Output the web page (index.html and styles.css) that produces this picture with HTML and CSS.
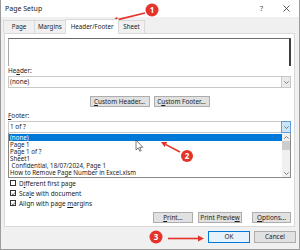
FILE: index.html
```html
<!DOCTYPE html>
<html>
<head>
<meta charset="utf-8">
<link rel="stylesheet" href="styles.css">
</head>
<body>
<div class="dialog">
  <div class="titlebar">
    <span class="title">Page Setup</span>
    <span class="ctl">?</span>
    <span class="ctl"><svg width="7" height="7" viewBox="0 0 7 7"><path d="M0.5 0.5 L6.5 6.5 M6.5 0.5 L0.5 6.5" stroke="#333" stroke-width="0.8" fill="none"/></svg></span>
  </div>
  <div class="tabs">
    <div class="tab wide">Page</div>
    <div class="tab">Margins</div>
    <div class="tab active">Header/Footer</div>
    <div class="tab last">Sheet</div>
  </div>
  <div class="pane">
    <div class="preview"></div>
    <div class="lbl">He<u>a</u>der:</div>
    <div class="combo">
      <span class="val">(none)</span>
      <span class="dd"><svg width="5" height="3" viewBox="0 0 5 3"><path d="M0.3 0.3 L2.5 2.5 L4.7 0.3" stroke="#555" stroke-width="0.7" fill="none"/></svg></span>
    </div>
    <div class="row-center">
      <div class="btn w60"><u>C</u>ustom Header...</div>
      <div class="btn w56">C<u>u</u>stom Footer...</div>
    </div>
    <div class="lbl lbl-footer"><u>F</u>ooter:</div>
    <div class="combo">
      <span class="val">1 of ?</span>
      <span class="dd hot"><svg width="5" height="3" viewBox="0 0 5 3"><path d="M0.3 0.3 L2.5 2.5 L4.7 0.3" stroke="#555" stroke-width="0.7" fill="none"/></svg></span>
    </div>
    <div class="list">
      <div class="items">
        <div class="item sel">(none)</div>
        <div class="item">Page 1</div>
        <div class="item">Page 1 of ?</div>
        <div class="item">Sheet1</div>
        <div class="item">&nbsp;Confidential, 18/07/2024, Page 1</div>
        <div class="item">How to Remove Page Number in Excel.xlsm</div>
      </div>
      <div class="scroll">
        <svg width="5" height="3" viewBox="0 0 5 3"><path d="M0.3 2.7 L2.5 0.5 L4.7 2.7" stroke="#555" stroke-width="0.7" fill="none"/></svg>
        <div class="thumb"></div>
        <div class="track"></div>
        <svg width="5" height="3" viewBox="0 0 5 3"><path d="M0.3 0.3 L2.5 2.5 L4.7 0.3" stroke="#555" stroke-width="0.7" fill="none"/></svg>
      </div>
    </div>
    <div class="checks">
      <div class="chk"><span class="box"></span><span>D<u>i</u>fferent first page</span></div>
      <div class="chk"><span class="box"><svg width="5" height="5" viewBox="0 0 5 5"><path d="M0.6 2.5 L2 3.9 L4.4 1.1" stroke="#333" stroke-width="0.7" fill="none"/></svg></span><span>Sca<u>l</u>e with document</span></div>
      <div class="chk"><span class="box"><svg width="5" height="5" viewBox="0 0 5 5"><path d="M0.6 2.5 L2 3.9 L4.4 1.1" stroke="#333" stroke-width="0.7" fill="none"/></svg></span><span>Align with page <u>m</u>argins</span></div>
    </div>
    <div class="row-end">
      <div class="btn w40"><u>P</u>rint...</div>
      <div class="btn w44">Print Previe<u>w</u></div>
      <div class="btn w39"><u>O</u>ptions...</div>
    </div>
  </div>
  <div class="actions">
    <div class="btn big default">OK</div>
    <div class="btn big">Cancel</div>
  </div>
  <svg class="annot" width="300" height="250" viewBox="0 0 300 250">
    <g fill="#e5332a" stroke="#e5332a">
      <line x1="145" y1="13" x2="117.8" y2="19.6" stroke-width="1.6"/>
      <polygon points="112,21 118.5,22.5 117.1,16.7" stroke="none"/>
      <circle cx="152" cy="10" r="6.5" stroke="none"/>
      <line x1="180" y1="152" x2="165.9" y2="144.6" stroke-width="1.6"/>
      <polygon points="161,142 167.2,142.1 164.6,147.1" stroke="none"/>
      <circle cx="187" cy="156" r="6" stroke="none"/>
      <line x1="168" y1="238.5" x2="198" y2="238.5" stroke-width="1.6"/>
      <polygon points="204,238.5 198,235.5 198,241.5" stroke="none"/>
      <circle cx="156" cy="237" r="6.5" stroke="none"/>
    </g>
    <g fill="#fff" font-family="Noto Sans, sans-serif" font-weight="700" font-size="8" text-anchor="middle">
      <text x="152" y="12.8">1</text>
      <text x="187" y="158.8">2</text>
      <text x="156" y="239.8">3</text>
    </g>
    <path d="M136 140 L136 150 L138.3 147.8 L139.8 151.2 L141.2 150.6 L139.7 147.3 L142.8 147.3 Z" fill="#fff" stroke="#222" stroke-width="0.6" stroke-linejoin="round"/>
  </svg>
</div>
</body>
</html>
```
FILE: styles.css
```css
* { box-sizing: border-box; margin: 0; padding: 0; }
body {
  margin: 0;
  width: 300px;
  height: 250px;
  overflow: hidden;
  font-family: "Noto Sans", "Open Sans", sans-serif;
  font-size: 6.4px;
  color: #1b1b1b;
  background: #fff;
}
u { text-decoration-thickness: 0.5px; text-underline-offset: 1px; }

.dialog {
  position: relative;
  width: 300px;
  height: 250px;
  background: #f0f0f0;
  border: 1px solid #9c9c9c;
  border-top: 0;
  display: flex;
  flex-direction: column;
}

.titlebar {
  height: 17px;
  background: #fff;
  display: flex;
  align-items: center;
  padding-left: 4px;
  font-size: 7px;
  color: #222;
}
.title { flex: 1; }
.ctl {
  width: 25px;
  display: flex;
  justify-content: center;
  color: #444;
  font-size: 7px;
}

.tabs {
  margin-top: 3px;
  height: 13px;
  padding-left: 2px;
  display: flex;
  align-items: flex-end;
  font-size: 6.2px;
}
.tab {
  height: 13px;
  line-height: 12px;
  padding: 0 3px;
  min-width: 27px;
  text-align: center;
  border: 1px solid #d9d9d9;
  border-bottom: 0;
  margin-right: -1px;
  background: #f0f0f0;
  color: #222;
}
.tab.wide { min-width: 32px; }
.tab.last { min-width: 28px; }
.tab.active {
  height: 15px;
  line-height: 13px;
  margin: 0 -2px -1px 0;
  padding: 0 5px;
  background: #fff;
  position: relative;
  z-index: 1;
}

.pane {
  margin: 0 4px 0 3px;
  height: 194px;
  background: #fff;
  border: 1px solid #d9d9d9;
  padding: 0 3px;
  display: flex;
  flex-direction: column;
}

.preview {
  margin-top: 4px;
  height: 28px;
  border-style: solid;
  border-width: 1px 2px 0 1px;
  border-color: #6b6b6b #3c3c3c #fff #a8a8a8;
}

.lbl {
  height: 9px;
  line-height: 9px;
}
.lbl-footer { margin-top: 4px; }

.combo {
  margin-top: 1px;
  height: 12px;
  border: 1px solid #c8c8c8;
  display: flex;
  align-items: stretch;
}
.val {
  flex: 1;
  line-height: 10px;
  padding-left: 1px;
}
.dd {
  width: 9px;
  border: 1px solid #c8c8c8;
  border-width: 0 0 0 1px;
  background: #eaeaea;
  display: flex;
  align-items: center;
  justify-content: center;
}
.dd.hot {
  background: #cce4f7;
  border: 1px solid #5c9ee0;
  margin: -1px -1px -1px 0;
  width: 10px;
}

.btn {
  height: 11px;
  line-height: 9px;
  border: 1px solid #adadad;
  background: #e1e1e1;
  text-align: center;
  white-space: nowrap;
  color: #1b1b1b;
}
.w60 { width: 60px; }
.w56 { width: 56px; }
.w40 { width: 40px; }
.w44 { width: 44px; }
.w39 { width: 39px; }

.row-center {
  margin-top: 8px;
  display: flex;
  justify-content: center;
  gap: 4px;
}

.list {
  height: 45px;
  border: 1px solid #8a8a8a;
  border-top: 0;
  display: flex;
}
.items {
  flex: 1;
  padding-top: 0.5px;
  font-size: 6.2px;
}
.item {
  height: 7.2px;
  line-height: 7.2px;
  padding-left: 1px;
  white-space: nowrap;
}
.item.sel {
  background: #0078d7;
  color: #fff;
}
.scroll {
  width: 8px;
  background: #f0f0f0;
  display: flex;
  flex-direction: column;
  align-items: center;
  padding: 3px 0 2px;
}
.thumb {
  margin-top: 2px;
  width: 8px;
  height: 9px;
  background: #cdcdcd;
}
.track { flex: 1; }

.checks {
  display: flex;
  flex-direction: column;
}
.chk {
  height: 10px;
  display: flex;
  align-items: center;
  padding-left: 2px;
}
.box {
  width: 6px;
  height: 6px;
  border: 1px solid #333;
  margin-right: 3px;
  display: flex;
  align-items: center;
  justify-content: center;
  background: #fff;
}
.box svg { flex: none; }

.row-end {
  margin-top: 4px;
  display: flex;
  justify-content: flex-end;
  gap: 5px;
}
.row-end .w39 { margin-left: 5px; }

.actions {
  margin-top: 4px;
  padding-right: 3px;
  display: flex;
  justify-content: flex-end;
  gap: 4px;
}
.btn.big {
  width: 42px;
  height: 12px;
  line-height: 10px;
}
.btn.default {
  border: 1px solid #0078d7;
  background: #e5f1fb;
}

.annot {
  position: absolute;
  left: -1px;
  top: 0;
  pointer-events: none;
}
```
